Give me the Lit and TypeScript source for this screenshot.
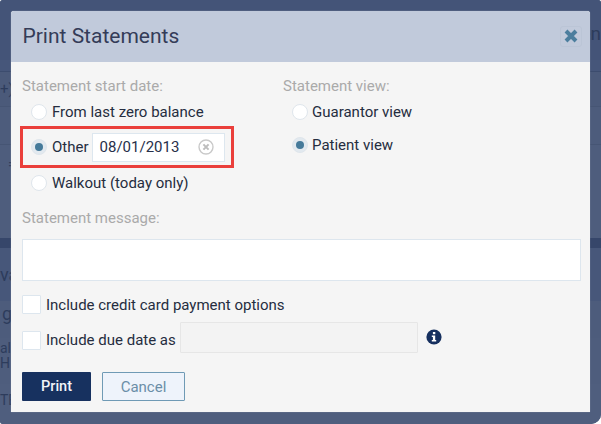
import { LitElement, html, css } from "lit";
import { customElement } from "lit/decorators.js";

@customElement("app-root")
export class AppRoot extends LitElement {
  static styles = css`
    :host {
      display: block;
      position: relative;
      width: 601px;
      height: 424px;
      overflow: hidden;
      background: #fff;
      font-family: Roboto, "Liberation Sans", sans-serif;
      color: #26304a;
    }
    .backdrop {
      height: 424px;
      display: flex;
      flex-direction: column;
      background: #4e5d7c;
      border-radius: 3px 3px 10px 3px;
      overflow: hidden;
      color: #2d3c5c;
      font-size: 15px;
    }
    .band {
      display: flex;
      align-items: center;
      justify-content: space-between;
      box-sizing: border-box;
      line-height: 14px;
      white-space: nowrap;
      overflow: hidden;
    }
    .b1 { height: 60px; background: #445478; align-items: flex-end; padding-bottom: 19px; }
    .b1 span:last-child { font-size: 19px; }
    .b2 { height: 12px; background: #46567a; border-bottom: 1px solid #3c4c6e; }
    .b3 { height: 34px; background: #4b5a7a; }
    .b4 { height: 38px; background: #4d5c7c; border-top: 1px solid #465574; }
    .b5 { height: 38px; background: #4e5d7d; border-top: 1px solid #465574; }
    .b6 { height: 56px; background: #4e5d7d; }
    .b7 { height: 10px; background: #36466a; }
    .b8 { height: 53px; background: #47577a; font-size: 18px; }
    .b9 { height: 37px; background: #4d5c7c; font-size: 18px; align-items: flex-start; padding-top: 6px; }
    .b10 { height: 46px; background: #4e5d7d; font-size: 14px; line-height: 15px; align-items: flex-start; padding-top: 3px; }
    .b11 { flex: 1; background: #4f5e7e; font-size: 18px; align-items: flex-start; padding-top: 9px; }
    .t-plus { margin-left: 0; }
    .t-eq { margin-left: 8px; }
    .t-va { margin-left: 0; }
    .t-g { margin-left: 2px; }
    .t-al { margin-left: 0; }
    .t-te { margin-left: 0; font-size: 14px; }

    .modal {
      position: absolute;
      left: 11px;
      top: 11px;
      width: 579px;
      height: 401px;
      background: #f5f5f5;
      border-radius: 3px 3px 0 0;
      box-shadow: 0 0 1px rgba(255, 255, 255, 0.6);
      display: flex;
      flex-direction: column;
      overflow: hidden;
    }
    .head {
      height: 51px;
      flex: none;
      background: #c1cadb;
      display: flex;
      align-items: center;
      justify-content: space-between;
      padding: 0 8px 0 11.5px;
      box-sizing: border-box;
    }
    .head h2 {
      margin: -2px 0 0;
      font-weight: 400;
      font-size: 21px;
      color: #343c58;
    }
    .close {
      width: 22px;
      height: 21px;
      margin-top: -1px;
      box-sizing: border-box;
      border: 1px solid #bbc5d6;
      border-radius: 3px;
      display: flex;
      align-items: center;
      justify-content: center;
    }
    .body {
      flex: 1;
      display: flex;
      flex-direction: column;
      padding: 15px 9px 0 11px;
      box-sizing: border-box;
      font-size: 15px;
    }
    .cols { display: flex; }
    .col-l { width: 261px; flex: none; display: flex; flex-direction: column; }
    .col-r { display: flex; flex-direction: column; }
    .label {
      height: 18px;
      line-height: 18px;
      color: #aaaaaa;
      font-size: 15px;
    }
    .radio-row {
      height: 26px;
      display: flex;
      align-items: center;
      gap: 5px;
      padding-left: 9px;
      color: #252d40;
    }
    .radio-row.first { margin-top: 4px; }
    .col-r .radio-row { gap: 4px; }
    .col-r .radio-row.second { margin-top: 7px; }
    .radio {
      width: 16px;
      height: 16px;
      box-sizing: border-box;
      flex: none;
      border: 1px solid #dfe6ec;
      border-radius: 50%;
      background: #fff;
      display: flex;
      align-items: center;
      justify-content: center;
    }
    .radio.on { background: #e2e9ef; }
    .radio.on::after {
      content: "";
      width: 8px;
      height: 8px;
      border-radius: 50%;
      background: #457a9a;
    }
    .highlight {
      width: 214px;
      height: 42px;
      margin: 1px 0 2px -2px;
      box-sizing: border-box;
      border: 3px solid #ea3f3b;
      display: flex;
      align-items: center;
      padding: 0 6px 0 8px;
      gap: 5px;
      color: #252d40;
    }
    .date {
      width: 133px;
      height: 29px;
      margin-left: -2px;
      box-sizing: border-box;
      background: #fff;
      border: 1px solid #dde7ef;
      display: flex;
      align-items: center;
      justify-content: space-between;
      padding: 0 10px 0 7px;
      font-size: 15px;
      color: #27304a;
      flex: none;
    }
    .msg-label { margin-top: 13px; }
    .textarea {
      height: 42px;
      margin-top: 12px;
      box-sizing: border-box;
      background: #fff;
      border: 1px solid #dde6ee;
    }
    .check-row {
      display: flex;
      align-items: center;
      gap: 5px;
      color: #252d40;
      height: 19px;
      margin-top: 14px;
    }
    .box {
      width: 19px;
      height: 19px;
      flex: none;
      box-sizing: border-box;
      background: #fff;
      border: 1px solid #dde6ee;
      border-radius: 1px;
    }
    .due-row {
      display: flex;
      align-items: center;
      height: 32px;
      margin-top: 7px;
      color: #252d40;
    }
    .due-row .box { margin-right: 5px; margin-top: 6px; }
    .due-row .txt { margin-top: 6px; }
    .due-input {
      width: 238px;
      height: 31px;
      margin-left: 4px;
      box-sizing: border-box;
      background: #f3f3f3;
      border: 1px solid #e6e6e6;
      border-radius: 1px;
    }
    .info { margin-left: 8px; display: block; }
    .actions { display: flex; gap: 11px; margin-top: 19px; }
    .btn {
      height: 29px;
      box-sizing: border-box;
      display: flex;
      align-items: center;
      justify-content: center;
      font-size: 15px;
      border-radius: 1px;
    }
    .print { width: 69px; background: #17315f; color: #f2f4f8; font-weight: 500; font-size: 14.5px; }
    .cancel { width: 83px; background: #eef3fb; border: 1px solid #6f9ab5; color: #6b8ea8; }
  `;

  render() {
    return html`
      <div class="backdrop">
        <div class="band b1"><span></span><span>en</span></div>
        <div class="band b2"></div>
        <div class="band b3"><span class="t-plus">+)</span></div>
        <div class="band b4"></div>
        <div class="band b5"><span class="t-eq">=</span></div>
        <div class="band b6"></div>
        <div class="band b7"></div>
        <div class="band b8"><span class="t-va">va</span></div>
        <div class="band b9"><span class="t-g">g</span></div>
        <div class="band b10"><span class="t-al">al<br />H</span></div>
        <div class="band b11"><span class="t-te">TE</span></div>
      </div>
      <div class="modal">
        <div class="head">
          <h2>Print Statements</h2>
          <div class="close">
            <svg width="14" height="14" viewBox="0 0 14 14">
              <path d="M2 2 L12 12 M12 2 L2 12" stroke="#4c7e9e" stroke-width="4" fill="none" />
            </svg>
          </div>
        </div>
        <div class="body">
          <div class="cols">
            <div class="col-l">
              <div class="label">Statement start date:</div>
              <div class="radio-row first"><span class="radio"></span>From last zero balance</div>
              <div class="highlight">
                <span class="radio on"></span>Other
                <div class="date">
                  <span>08/01/2013</span>
                  <svg width="16" height="16" viewBox="0 0 16 16">
                    <circle cx="8" cy="8" r="7" fill="none" stroke="#c9c9c9" stroke-width="1.4" />
                    <path d="M5.4 5.4 L10.6 10.6 M10.6 5.4 L5.4 10.6" stroke="#bdbdbd" stroke-width="2" />
                  </svg>
                </div>
              </div>
              <div class="radio-row"><span class="radio"></span>Walkout (today only)</div>
            </div>
            <div class="col-r">
              <div class="label">Statement view:</div>
              <div class="radio-row first"><span class="radio"></span>Guarantor view</div>
              <div class="radio-row second"><span class="radio on"></span>Patient view</div>
            </div>
          </div>
          <div class="label msg-label">Statement message:</div>
          <div class="textarea"></div>
          <div class="check-row"><span class="box"></span>Include credit card payment options</div>
          <div class="due-row">
            <span class="box"></span><span class="txt">Include due date as</span>
            <div class="due-input"></div>
            <svg class="info" width="16" height="16" viewBox="0 0 16 16">
              <circle cx="8" cy="8" r="7.6" fill="#16305f" />
              <rect x="6.9" y="3" width="2.4" height="2.2" fill="#fff" />
              <path d="M5.8 6.5 H9.2 V11 H10.2 V12.6 H5.8 V11 H6.9 V8 H5.8 Z" fill="#fff" />
            </svg>
          </div>
          <div class="actions">
            <div class="btn print">Print</div>
            <div class="btn cancel">Cancel</div>
          </div>
        </div>
      </div>
    `;
  }
}
